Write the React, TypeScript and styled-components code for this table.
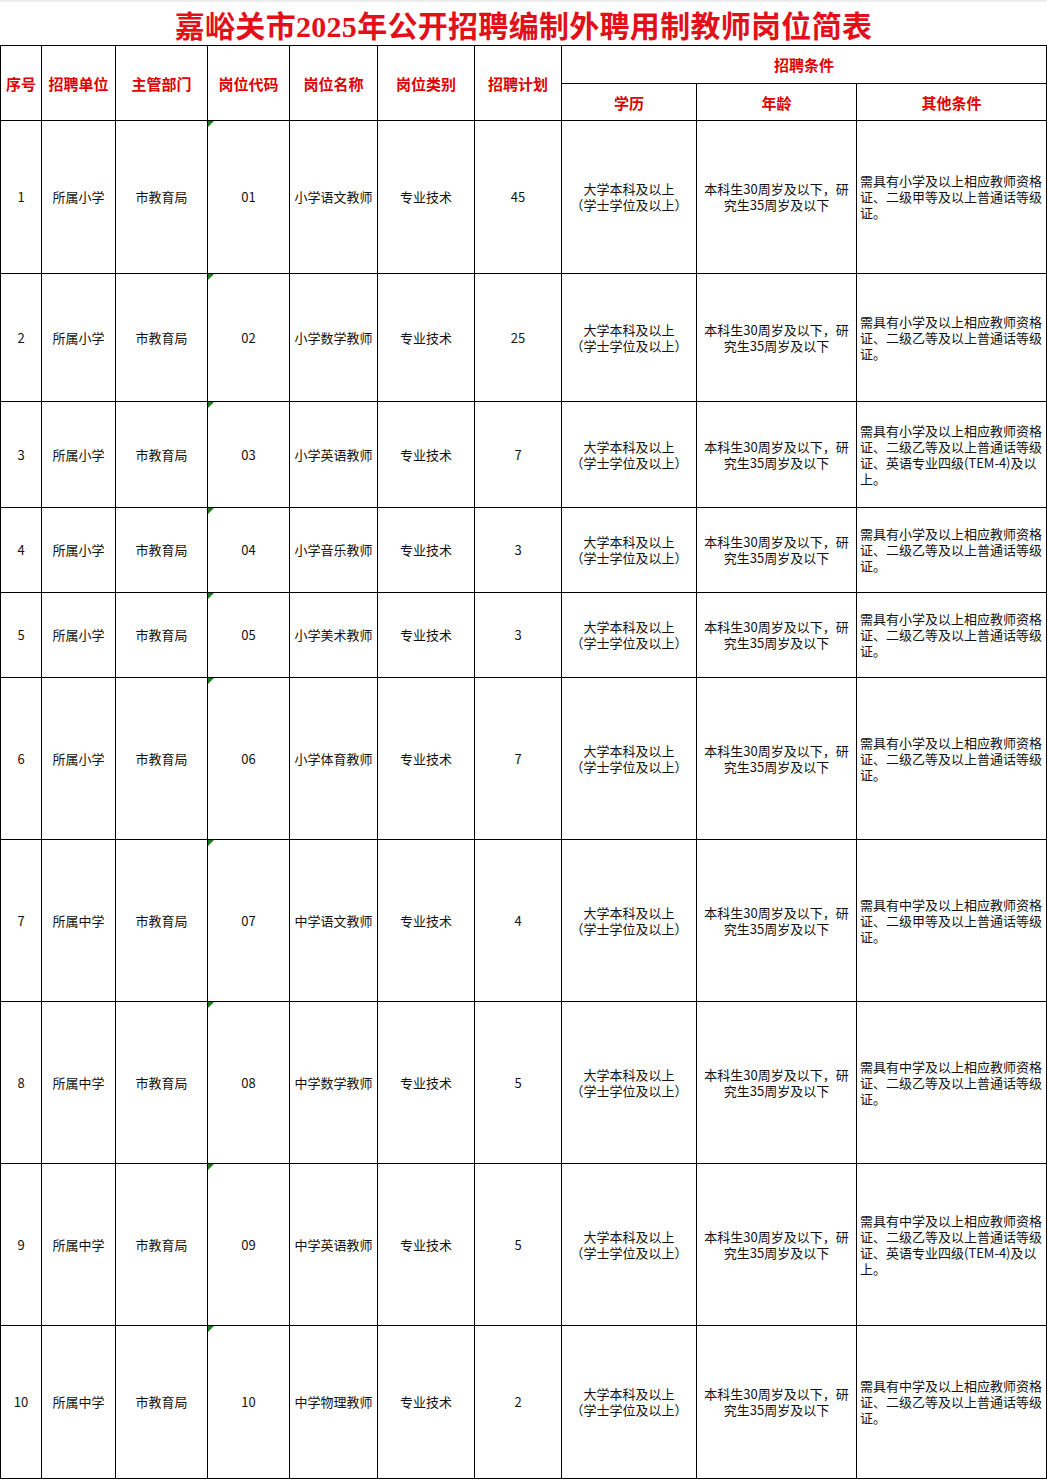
import React from 'react';
import styled, { createGlobalStyle } from 'styled-components';

const GlobalStyle = createGlobalStyle`
    html, body {
        margin: 0;
        padding: 0;
        background: #ffffff;
    }
    body {
        font-family: "Noto Sans CJK SC", "Noto Sans", sans-serif;
    }
`

const Page = styled.div`
    width: 1047px;
    background: #ffffff;
`

const Title = styled.h1`
    margin: 0;
    height: 45px;
    display: flex;
    align-items: center;
    justify-content: center;
    border-top: 2px solid #ececec;
    box-sizing: border-box;
    font-family: "Liberation Serif", "Noto Sans CJK SC", serif;
    font-size: 30px;
    font-weight: 700;
    color: #e3101a;
    letter-spacing: 0.3px;
`

const Table = styled.table`
    width: 1047px;
    border-collapse: collapse;
    table-layout: fixed;
    border-right: 1px solid #000;
`

const HeadCell = styled.th`
    border: 1px solid #000;
    padding: 0;
    font-size: 15px;
    font-weight: 700;
    color: #e00000;
    text-align: center;
    vertical-align: middle;
    white-space: nowrap;
`

interface CellProps {
    $align?: 'left' | 'center'
    $flag?: boolean
}

const Cell = styled.td<CellProps>`
    position: relative;
    border: 1px solid #000;
    padding: ${props => props.$align === 'left' ? '0 2px 0 3px' : '0'};
    font-size: 13px;
    line-height: 16px;
    color: #111;
    text-align: ${props => props.$align || 'center'};
    vertical-align: middle;
    white-space: nowrap;

    ${props => props.$flag && `
        &::before {
            content: '';
            position: absolute;
            left: 0;
            top: 0;
            border-top: 6px solid #1e7b1e;
            border-right: 6px solid transparent;
        }
    `}
`

const HeadRow = styled.tr<{ $height: number }>`
    height: ${props => props.$height}px;
`

const BodyRow = styled.tr<{ $height: number }>`
    height: ${props => props.$height}px;
`

const colWidths = [41, 74, 92, 82, 88, 97, 87, 135, 160, 190]

interface Job {
    unit: string
    code: string
    name: string
    plan: string
    other: string[]
    height: number
}

const primary = (level: string, grade: string) => [
    `需具有${level}及以上相应教师资格`,
    `证、二级${grade}等及以上普通话等级`,
    '证。',
]

const english = (level: string) => [
    `需具有${level}及以上相应教师资格`,
    '证、二级乙等及以上普通话等级',
    '证、英语专业四级(TEM-4)及以',
    '上。',
]

const jobs: Job[] = [
    { unit: '所属小学', code: '01', name: '小学语文教师', plan: '45', other: primary('小学', '甲'), height: 153 },
    { unit: '所属小学', code: '02', name: '小学数学教师', plan: '25', other: primary('小学', '乙'), height: 128 },
    { unit: '所属小学', code: '03', name: '小学英语教师', plan: '7', other: english('小学'), height: 106 },
    { unit: '所属小学', code: '04', name: '小学音乐教师', plan: '3', other: primary('小学', '乙'), height: 85 },
    { unit: '所属小学', code: '05', name: '小学美术教师', plan: '3', other: primary('小学', '乙'), height: 85 },
    { unit: '所属小学', code: '06', name: '小学体育教师', plan: '7', other: primary('小学', '乙'), height: 162 },
    { unit: '所属中学', code: '07', name: '中学语文教师', plan: '4', other: primary('中学', '甲'), height: 162 },
    { unit: '所属中学', code: '08', name: '中学数学教师', plan: '5', other: primary('中学', '乙'), height: 162 },
    { unit: '所属中学', code: '09', name: '中学英语教师', plan: '5', other: english('中学'), height: 162 },
    { unit: '所属中学', code: '10', name: '中学物理教师', plan: '2', other: primary('中学', '乙'), height: 153 },
]

const Lines = ({ lines }: { lines: string[] }) => (
    <>
        {lines.map((line, i) => (
            <React.Fragment key={i}>
                {i > 0 && <br />}
                {line}
            </React.Fragment>
        ))}
    </>
)

const App = () => {
    return (
        <Page>
            <GlobalStyle />
            <Title>嘉峪关市2025年公开招聘编制外聘用制教师岗位简表</Title>
            <Table>
                <colgroup>
                    {colWidths.map((w, i) => <col key={i} style={{ width: w }} />)}
                </colgroup>
                <thead>
                    <HeadRow $height={38}>
                        <HeadCell rowSpan={2}>序号</HeadCell>
                        <HeadCell rowSpan={2}>招聘单位</HeadCell>
                        <HeadCell rowSpan={2}>主管部门</HeadCell>
                        <HeadCell rowSpan={2}>岗位代码</HeadCell>
                        <HeadCell rowSpan={2}>岗位名称</HeadCell>
                        <HeadCell rowSpan={2}>岗位类别</HeadCell>
                        <HeadCell rowSpan={2}>招聘计划</HeadCell>
                        <HeadCell colSpan={3}>招聘条件</HeadCell>
                    </HeadRow>
                    <HeadRow $height={37}>
                        <HeadCell>学历</HeadCell>
                        <HeadCell>年龄</HeadCell>
                        <HeadCell>其他条件</HeadCell>
                    </HeadRow>
                </thead>
                <tbody>
                    {jobs.map((job, index) => (
                        <BodyRow key={job.code} $height={job.height}>
                            <Cell>{index + 1}</Cell>
                            <Cell>{job.unit}</Cell>
                            <Cell>市教育局</Cell>
                            <Cell $flag>{job.code}</Cell>
                            <Cell>{job.name}</Cell>
                            <Cell>专业技术</Cell>
                            <Cell>{job.plan}</Cell>
                            <Cell><Lines lines={['大学本科及以上', '（学士学位及以上）']} /></Cell>
                            <Cell><Lines lines={['本科生30周岁及以下，研', '究生35周岁及以下']} /></Cell>
                            <Cell $align="left"><Lines lines={job.other} /></Cell>
                        </BodyRow>
                    ))}
                </tbody>
            </Table>
        </Page>
    )
}

export default App;
